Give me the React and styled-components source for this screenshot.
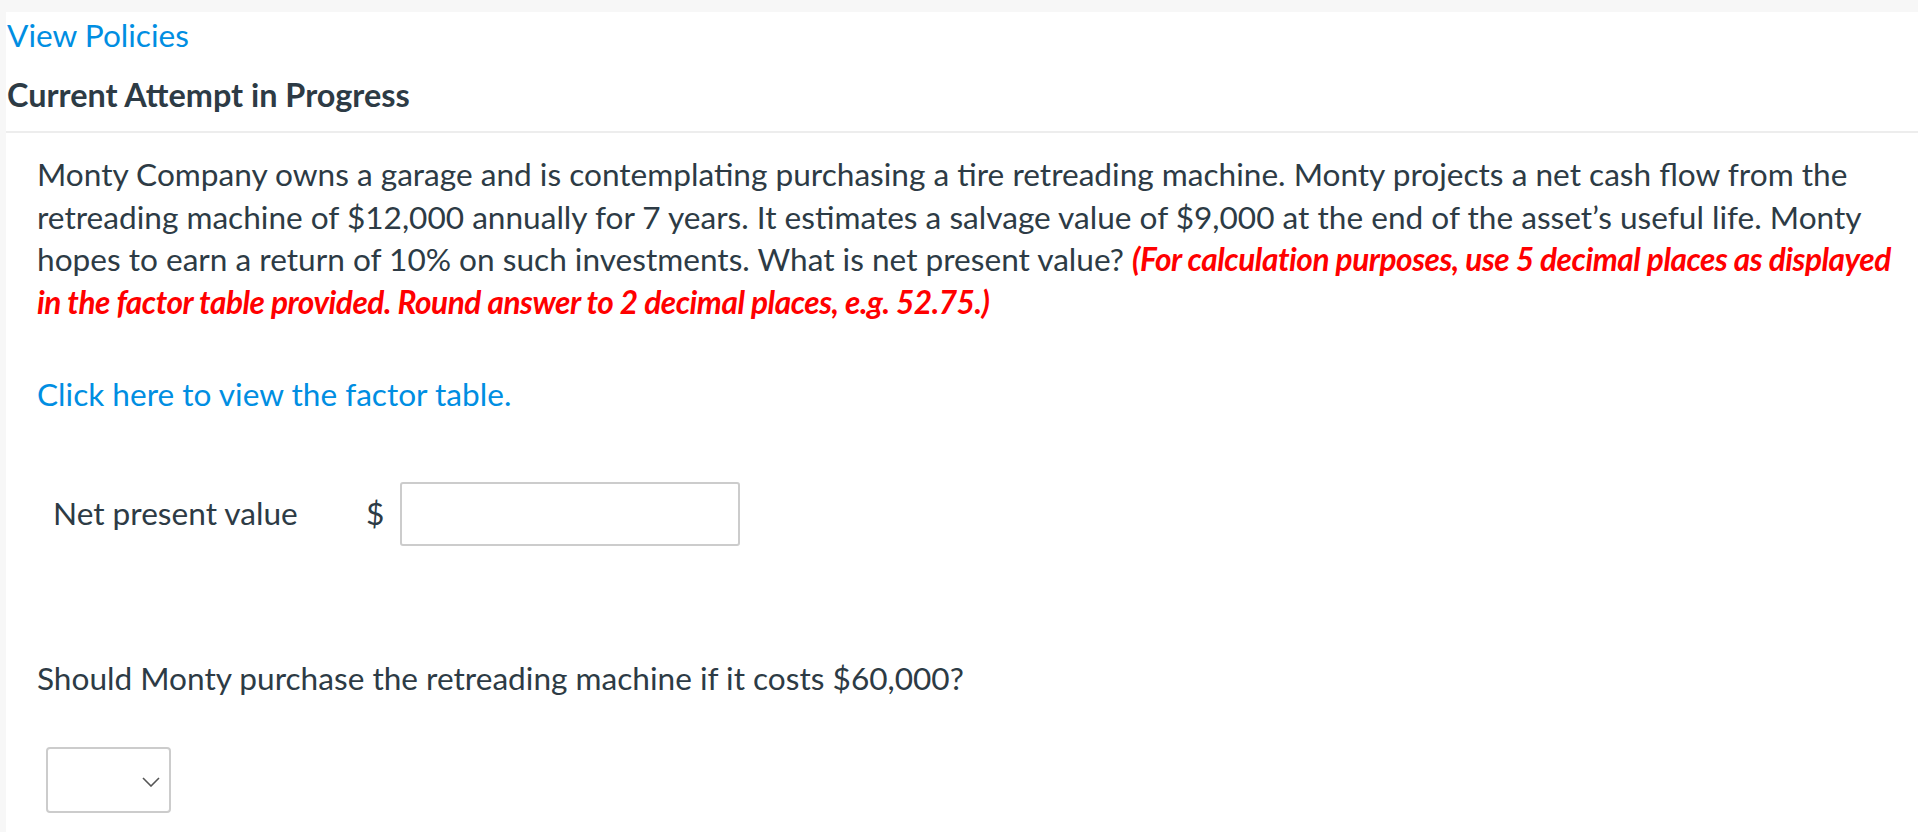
import React from "react";
import styled, { createGlobalStyle } from "styled-components";

const textColor = "#2d3b45";
const linkColor = "#008ee2";
const alertRed = "#ff0000";
const fieldBorder = "#cccccc";

const GlobalStyle = createGlobalStyle`
  html, body {
    margin: 0;
    padding: 0;
    background: #f7f7f7;
  }
  body {
    font-family: Lato, "Open Sans", sans-serif;
    color: ${textColor};
  }
`;

const Page = styled.div`
  margin: 12px 0 0 6px;
  background: #ffffff;
  min-height: 820px;
`;

const Header = styled.div`
  padding: 0 0 0 1px;
  border-bottom: 2px solid #ededed;
`;

const PolicyLink = styled.a`
  display: block;
  font-size: 31.6px;
  line-height: 46px;
  color: ${linkColor};
  text-decoration: none;
`;

const Title = styled.h2`
  margin: 0;
  padding: 14px 0 14px;
  font-size: 32.4px;
  line-height: 45px;
  font-weight: 700;
`;

const Question = styled.div`
  padding: 20px 6px 0 31px;
  font-size: 31.6px;
  line-height: 42.5px;
`;

const Paragraph = styled.p`
  margin: 0;
`;

const Hint = styled.span`
  color: ${alertRed};
  font-style: italic;
  font-weight: 700;
  letter-spacing: -0.45px;
`;

const TableLink = styled.a`
  display: block;
  margin-top: 50px;
  color: ${linkColor};
  text-decoration: none;
`;

const AnswerRow = styled.div`
  display: flex;
  align-items: center;
  margin-top: 66px;
  padding-left: 16px;
`;

const Label = styled.span`
  width: 313px;
`;

const Currency = styled.span`
  width: 34px;
`;

const AmountInput = styled.input`
  box-sizing: border-box;
  width: 340px;
  height: 64px;
  border: 2px solid ${fieldBorder};
  border-radius: 3px;
  background: #fff;
  font: inherit;
  color: ${textColor};
  padding: 0 12px;
  outline: none;
`;

const FollowUp = styled.p`
  margin: 111px 0 0;
`;

const SelectBox = styled.div`
  box-sizing: border-box;
  display: flex;
  align-items: center;
  justify-content: flex-end;
  width: 125px;
  height: 66px;
  margin: 48px 0 0 9px;
  padding: 4px 9px 0 0;
  border: 2px solid ${fieldBorder};
  border-radius: 4px;
  background: #fff;
`;

function Chevron() {
  return (
    <svg width="18" height="10" viewBox="0 0 18 10" fill="none">
      <path d="M1 1l8 8 8-8" stroke="#555555" strokeWidth="1.6" />
    </svg>
  );
}

function App() {
  return (
    <>
      <GlobalStyle />
      <Page>
        <Header>
          <PolicyLink href="#">View Policies</PolicyLink>
          <Title>Current Attempt in Progress</Title>
        </Header>

        <Question>
          <Paragraph>
            Monty Company owns a garage and is contemplating purchasing a tire
            retreading machine. Monty projects a net cash flow from the
            retreading machine of $12,000 annually for 7 years. It estimates a
            salvage value of $9,000 at the end of the asset’s useful life.
            Monty hopes to earn a return of 10% on such investments. What is
            net present value?{" "}
            <Hint>
              (For calculation purposes, use 5 decimal places as displayed in
              the factor table provided. Round answer to 2 decimal places, e.g.
              52.75.)
            </Hint>
          </Paragraph>

          <TableLink href="#">Click here to view the factor table.</TableLink>

          <AnswerRow>
            <Label>Net present value</Label>
            <Currency>$</Currency>
            <AmountInput type="text" aria-label="Net present value" />
          </AnswerRow>

          <FollowUp>
            Should Monty purchase the retreading machine if it costs $60,000?
          </FollowUp>

          <SelectBox>
            <Chevron />
          </SelectBox>
        </Question>
      </Page>
    </>
  );
}

export default App;
